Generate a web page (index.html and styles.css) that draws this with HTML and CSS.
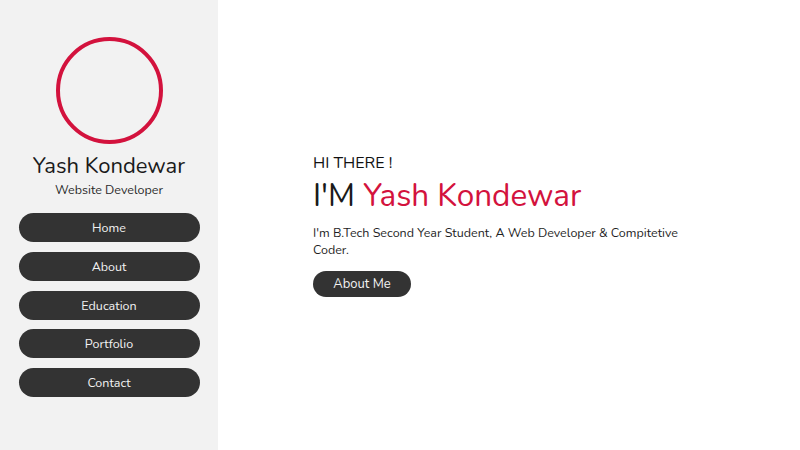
FILE: index.html
```html
<!DOCTYPE html>
<html lang="en">
<head>
<meta charset="utf-8">
<title>Yash Kondewar</title>
<link rel="stylesheet" href="styles.css">
</head>
<body>
<div class="page">
  <aside class="sidebar">
    <div class="avatar"></div>
    <h2 class="name">Yash Kondewar</h2>
    <p class="role">Website Developer</p>
    <nav class="nav">
      <a class="nav-btn" href="#">Home</a>
      <a class="nav-btn" href="#">About</a>
      <a class="nav-btn" href="#">Education</a>
      <a class="nav-btn" href="#">Portfolio</a>
      <a class="nav-btn" href="#">Contact</a>
    </nav>
  </aside>
  <main class="main">
    <div class="intro">
      <p class="hi">HI THERE !</p>
      <h1 class="title">I'M <span class="accent">Yash Kondewar</span></h1>
      <p class="desc">I'm B.Tech Second Year Student, A Web Developer &amp; Compitetive Coder.</p>
      <a class="btn" href="#">About Me</a>
    </div>
  </main>
</div>
</body>
</html>
```
FILE: styles.css
```css
* { box-sizing: border-box; }
html, body { margin: 0; padding: 0; }
body {
  font-family: "Nunito", "Open Sans", "Noto Sans", sans-serif;
  color: #222;
  background: #fff;
}
.page {
  display: flex;
  width: 800px;
  height: 450px;
}
.sidebar {
  width: 218px;
  flex: none;
  background: #f2f2f2;
  display: flex;
  flex-direction: column;
  align-items: center;
  padding-top: 37px;
}
.avatar {
  width: 107px;
  height: 107px;
  border-radius: 50%;
  border: 4px solid #d3123d;
}
.name {
  margin: 7px 0 0;
  font-size: 22px;
  font-weight: 400;
  line-height: 30px;
  color: #1a1a1a;
}
.role {
  margin: 0;
  font-size: 12.5px;
  line-height: 17px;
  color: #2a2a2a;
}
.nav {
  margin-top: 15px;
  display: flex;
  flex-direction: column;
  gap: 9.8px;
}
.nav-btn {
  display: flex;
  align-items: center;
  justify-content: center;
  width: 181px;
  height: 29px;
  border-radius: 15px;
  background: #333333;
  color: #f2f2f2;
  text-decoration: none;
  font-size: 12.5px;
}
.main {
  flex: 1;
  display: flex;
  align-items: center;
  padding-left: 95px;
}
.intro {
  width: 390px;
}
.hi {
  margin: 0;
  font-size: 16px;
  line-height: 20px;
  color: #111;
}
.title {
  margin: 2px 0 0;
  font-size: 31.5px;
  font-weight: 400;
  line-height: 42px;
  color: #1a1a1a;
}
.accent { color: #d3123d; }
.desc {
  margin: 7px 0 0;
  font-size: 12.5px;
  line-height: 17px;
  color: #1f1f1f;
}
.btn {
  display: inline-flex;
  align-items: center;
  justify-content: center;
  margin-top: 12.5px;
  width: 98px;
  height: 26px;
  border-radius: 13px;
  background: #333333;
  color: #f2f2f2;
  text-decoration: none;
  font-size: 13px;
}
```
